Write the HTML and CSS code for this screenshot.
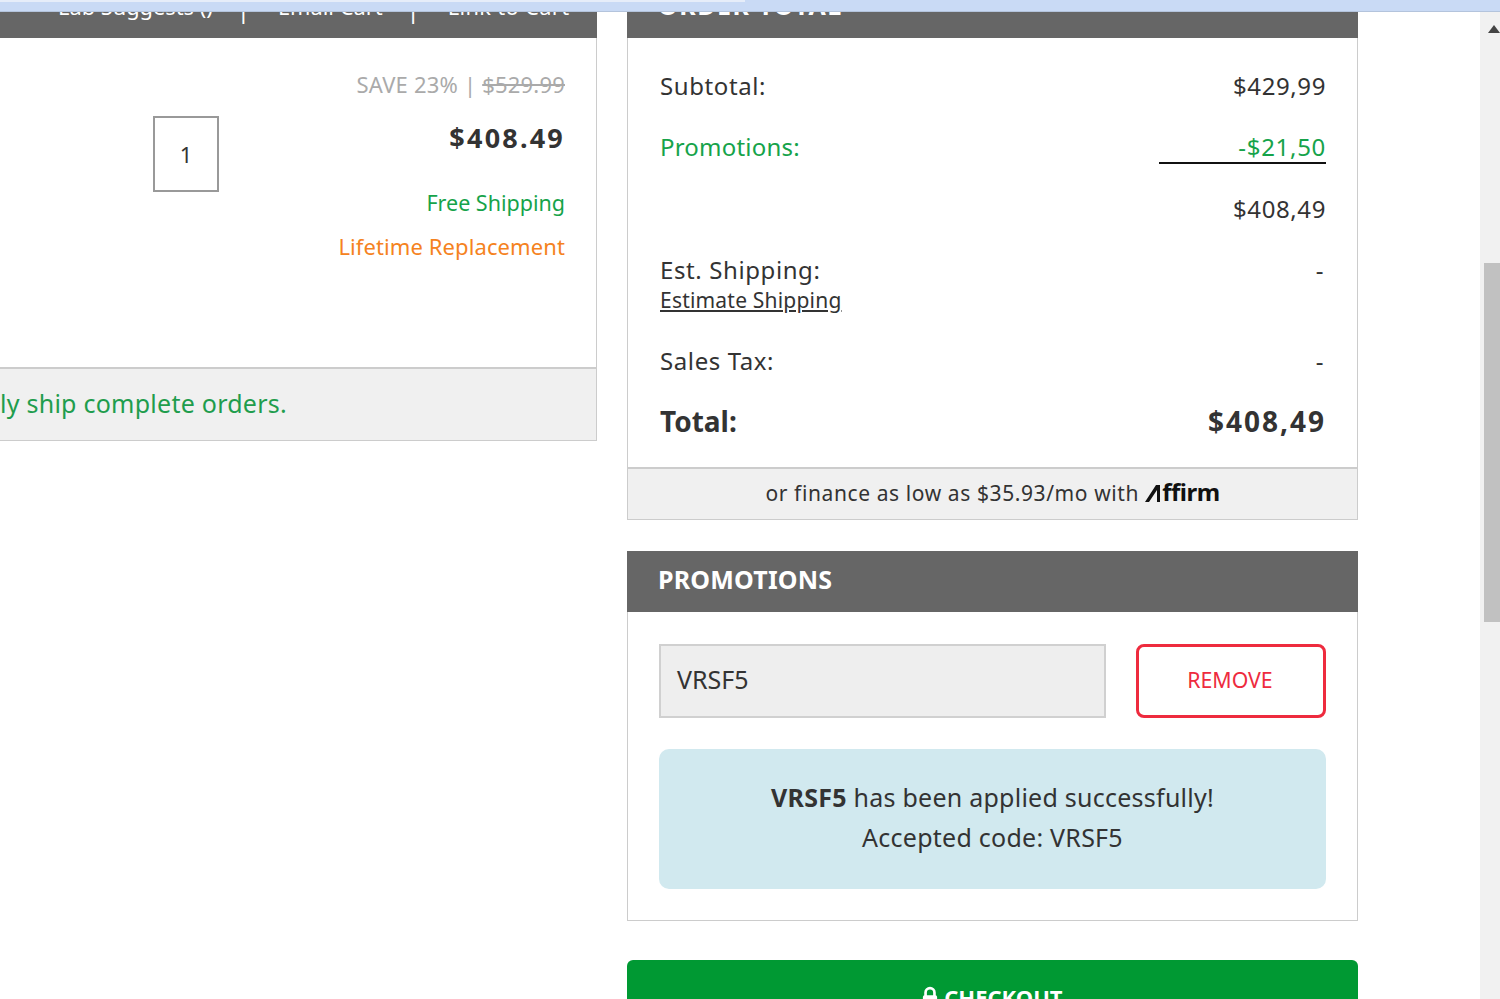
FILE: index.html
```html
<!DOCTYPE html>
<html lang="en">
<head>
  <meta charset="UTF-8">
  <meta name="viewport" content="width=device-width, initial-scale=1.0">
  <title>Cart</title>
  <link rel="stylesheet" href="styles.css">
</head>
<body>
  <div class="browser-strip"><span class="browser-tab"></span></div>

  <div class="viewport">
    <main class="page">
      <!-- Carrito -->
      <section class="cart-col">
        <div class="card">
          <div class="bar cart-bar">
            <span>Lab Suggests ()</span>
            <span class="sep">|</span>
            <span>Email Cart</span>
            <span class="sep">|</span>
            <span class="link-cart">Link to Cart</span>
          </div>
          <div class="cart-item">
            <div class="qty">1</div>
            <div class="prices">
              <p class="save">SAVE 23% | <s>$529.99</s></p>
              <p class="price">$408.49</p>
              <p class="free">Free Shipping</p>
              <p class="lifetime">Lifetime Replacement</p>
            </div>
          </div>
          <div class="cart-foot">ly ship complete orders.</div>
        </div>
      </section>

      <!-- Resumen -->
      <aside class="side-col">
        <div class="card">
          <div class="bar total-bar">ORDER TOTAL</div>
          <div class="totals">
            <div class="row row-subtotal"><span>Subtotal:</span><span>$429,99</span></div>
            <div class="row row-promo"><span>Promotions:</span><span class="promo-amount">-$21,50</span></div>
            <div class="row row-net"><span></span><span>$408,49</span></div>
            <div class="row row-ship">
              <div>Est. Shipping:<a class="estimate" href="#">Estimate Shipping</a></div>
              <span class="dash">-</span>
            </div>
            <div class="row row-tax"><span>Sales Tax:</span><span class="dash">-</span></div>
            <div class="row row-total"><span class="total-label">Total:</span><span>$408,49</span></div>
          </div>
          <div class="finance">
            or finance as low as $35.93/mo with
            <span class="affirm">
              <svg class="affirm-mark" viewBox="0 0 18 20" width="18" height="20"><path d="M0 19 L11 2 H15 V19 H12 V7 L4 19 Z" fill="#111"/></svg>ffirm
            </span>
          </div>
        </div>

        <div class="card promo-card">
          <div class="bar promo-bar">PROMOTIONS</div>
          <div class="promo-body">
            <div class="promo-form">
              <div class="promo-input">VRSF5</div>
              <button class="remove">REMOVE</button>
            </div>
            <div class="promo-msg">
              <p><b>VRSF5</b> has been applied successfully!</p>
              <p>Accepted code: VRSF5</p>
            </div>
          </div>
        </div>

        <button class="checkout">
          <svg class="lock" viewBox="0 0 18 26" width="16" height="24"><path d="M4 12 V8 a5 5 0 0 1 10 0 V12" fill="none" stroke="#fff" stroke-width="3"/><rect x="1" y="11" width="16" height="14" rx="2" fill="#fff"/></svg>
          CHECKOUT
        </button>
      </aside>
    </main>

    <div class="scrollbar">
      <div class="scroll-arrow"></div>
      <div class="scroll-thumb"></div>
    </div>
  </div>
</body>
</html>
```

FILE: styles.css
```css
* {
  margin: 0;
  padding: 0;
  box-sizing: border-box;
}

html, body {
  height: 100%;
  overflow: hidden;
}

body {
  font-family: "Noto Sans", Arial, sans-serif;
  background-color: white;
  color: #333;
  display: flex;
  flex-direction: column;
}

.browser-strip {
  height: 12px;
  flex: none;
  background-color: #c9daf5;
  border-bottom: 1px solid #b4c4dc;
}

.browser-tab {
  display: block;
  width: 745px;
  height: 2px;
  background-color: #e6edf9;
}

/* la página está scrolleada: el encabezado queda cortado arriba */
.viewport {
  flex: 1;
  display: flex;
  min-height: 0;
  overflow: hidden;
}

.page {
  flex: 1;
  display: flex;
  align-items: flex-start;
  gap: 30px;
  margin-top: -30px;
}

.cart-col {
  width: 597px;
  flex: none;
}

.side-col {
  width: 731px;
  flex: none;
}

.card {
  background-color: white;
  border: 1px solid #ccc;
  border-top: none;
}

.cart-col .card {
  border-left: none;
}

.bar {
  background-color: #666;
  color: white;
  font-weight: bold;
}

.cart-bar {
  height: 56px;
  margin-right: -1px;
  padding: 10px 0 0 58px;
  display: flex;
  gap: 29px;
  font-size: 21.8px;
  font-weight: normal;
}

.sep {
  margin: 0 -1px 0 -5px;
  font-size: 24px;
}

.link-cart {
  letter-spacing: 0.35px;
}

.cart-item {
  height: 329px;
  padding: 0 31px 0 153px;
  display: flex;
  justify-content: space-between;
}

.qty {
  width: 66px;
  height: 76px;
  margin-top: 78px;
  border: 2px solid #999;
  font-size: 22px;
  line-height: 72px;
  text-align: center;
}

.prices {
  text-align: right;
  font-size: 22px;
}

.save {
  margin-top: 31px;
  color: #aaa;
  line-height: 30px;
  letter-spacing: 0.2px;
}

.price {
  margin-top: 21px;
  font-size: 27px;
  font-weight: bold;
  line-height: 36px;
  letter-spacing: 2.2px;
}

.free {
  margin-top: 32px;
  color: #16a34a;
  font-size: 21.5px;
  line-height: 30px;
}

.lifetime {
  margin-top: 13px;
  color: #f58220;
  line-height: 30px;
  letter-spacing: 0.1px;
}

.cart-foot {
  height: 73px;
  background-color: #f0f0f0;
  border-top: 2px solid #ccc;
  color: #1f9d4d;
  font-size: 25px;
  line-height: 68px;
  letter-spacing: 0.25px;
}

.total-bar {
  height: 56px;
  margin: 0 -1px;
  padding: 6px 31px 0;
  font-size: 25px;
  letter-spacing: 1.5px;
}

.totals {
  height: 429px;
  padding: 0 31px 0 32px;
  font-size: 24px;
}

.row {
  display: flex;
  justify-content: space-between;
  line-height: 34px;
  letter-spacing: 0.6px;
}

.row-subtotal { padding-top: 31px; }
.row-promo { padding-top: 27px; color: #16a34a; letter-spacing: 0.2px; }
.row-net { padding-top: 28px; }
.row-ship { padding-top: 27px; }
.row-tax { padding-top: 31px; }

.dash {
  margin-right: 2px;
}

.promo-amount {
  width: 167px;
  height: 34px;
  text-align: right;
  border-bottom: 2px solid #111;
  letter-spacing: 0.7px;
}

.estimate {
  display: block;
  color: #333;
  font-size: 21px;
  line-height: 26px;
  letter-spacing: 0.2px;
}

.row-total {
  padding-top: 26px;
  font-size: 28px;
  font-weight: bold;
  letter-spacing: 2px;
}

.total-label {
  letter-spacing: 0;
}

.finance {
  height: 52px;
  background-color: #f0f0f0;
  border-top: 2px solid #ccc;
  font-size: 21px;
  line-height: 46px;
  letter-spacing: 0.6px;
  text-align: center;
}

.affirm {
  font-weight: bold;
  font-size: 24px;
  letter-spacing: -0.5px;
  color: #111;
}

.affirm-mark {
  vertical-align: -2px;
  margin-right: -1px;
}

.promo-card {
  margin-top: 31px;
}

.promo-bar {
  height: 61px;
  margin: 0 -1px;
  padding-left: 31px;
  font-size: 25px;
  line-height: 56px;
  letter-spacing: 0.2px;
}

.promo-body {
  height: 308px;
  padding: 32px 31px 0;
}

.promo-form {
  display: flex;
  gap: 30px;
}

.promo-input {
  flex: 1;
  height: 74px;
  padding-left: 16px;
  background-color: #eee;
  border: 2px solid #d0d0d0;
  font-size: 25px;
  line-height: 66px;
}

.remove {
  width: 190px;
  height: 74px;
  padding: 0 2px 3px 0;
  background-color: white;
  border: 3px solid #ee2b3e;
  border-radius: 8px;
  color: #ee2b3e;
  font-family: inherit;
  font-size: 21.3px;
}

.promo-msg {
  height: 140px;
  margin-top: 31px;
  padding-top: 28px;
  background-color: #d1e9ef;
  border-radius: 10px;
  font-size: 25px;
  line-height: 40px;
  letter-spacing: 0.25px;
  text-align: center;
}

.checkout {
  display: block;
  width: 100%;
  height: 70px;
  margin-top: 39px;
  padding-top: 3px;
  background-color: #093;
  border: none;
  border-radius: 6px;
  color: white;
  font-family: inherit;
  font-size: 22px;
  font-weight: bold;
}

.lock {
  vertical-align: -3px;
}

.scrollbar {
  width: 20px;
  flex: none;
  background-color: #f1f1f1;
}

.scroll-arrow {
  width: 0;
  height: 0;
  margin: 13px 0 0 8px;
  border-left: 6px solid transparent;
  border-right: 6px solid transparent;
  border-bottom: 8px solid #444;
}

.scroll-thumb {
  height: 359px;
  margin: 230px 0 0 4px;
  background-color: #c1c1c1;
}
```
